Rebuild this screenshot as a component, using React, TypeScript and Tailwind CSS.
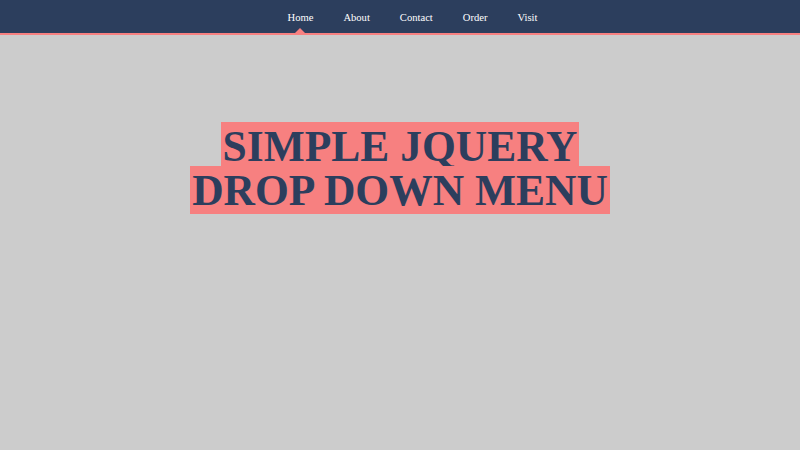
const links = ["Home", "About", "Contact", "Order", "Visit"];

export default function App() {
  return (
    <div className="min-h-[450px] bg-[#cccccc] font-['Liberation_Serif',serif]">
      <nav className="h-[35px] bg-[#2c3e5d] border-b-2 border-[#f78080]">
        <ul className="flex justify-center pl-[25px]">
          {links.map((l, i) => (
            <li key={l} className="relative">
              <a className="block px-[15px] pt-[10px] text-[10.6px] leading-[15px] text-white">{l}</a>
              {i === 0 && (
                <span className="absolute left-1/2 -translate-x-1/2 top-[28px] w-0 h-0 border-x-[5px] border-x-transparent border-b-[5px] border-b-[#f78080]" />
              )}
            </li>
          ))}
        </ul>
      </nav>
      <div className="pt-[89px] text-center">
        <h1 className="text-[43.5px] leading-[44px] font-bold text-[#2c3e5d]">
          <span className="bg-[#f78080] px-[2px] [box-decoration-break:clone]">
            SIMPLE JQUERY
            <br />
            DROP DOWN MENU
          </span>
        </h1>
      </div>
    </div>
  );
}
